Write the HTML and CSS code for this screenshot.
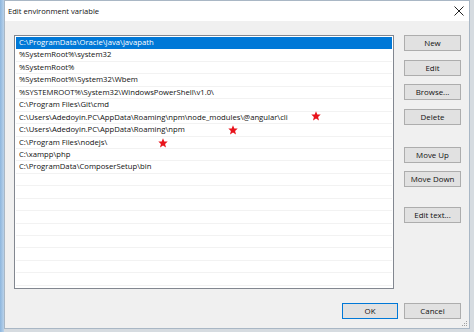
FILE: index.html
```html
<!DOCTYPE html>
<html>
<head>
    <meta charset="utf-8" />
    <title>Edit environment variable</title>
    <link rel="stylesheet" href="styles.css">
</head>
<body>
    <div class="window">
        <div class="titlebar">
            <span class="title">Edit environment variable</span>
            <svg class="close" width="10" height="10" viewBox="0 0 10 10">
                <path d="M0.5 0.5 L9.5 9.5 M9.5 0.5 L0.5 9.5" stroke="#222" stroke-width="1" fill="none" />
            </svg>
        </div>
        <div class="content">
            <div class="listbox">
                <div class="row selected">C:\ProgramData\Oracle\Java\javapath</div>
                <div class="row">%SystemRoot%\system32</div>
                <div class="row">%SystemRoot%</div>
                <div class="row">%SystemRoot%\System32\Wbem</div>
                <div class="row">%SYSTEMROOT%\System32\WindowsPowerShell\v1.0\</div>
                <div class="row">C:\Program Files\Git\cmd</div>
                <div class="row">C:\Users\Adedoyin.PC\AppData\Roaming\npm\node_modules\@angular\cli</div>
                <div class="row">C:\Users\Adedoyin.PC\AppData\Roaming\npm</div>
                <div class="row">C:\Program Files\nodejs\</div>
                <div class="row">C:\xampp\php</div>
                <div class="row">C:\ProgramData\ComposerSetup\bin</div>
                <div class="row"></div>
                <div class="row"></div>
                <div class="row"></div>
                <div class="row"></div>
                <div class="row"></div>
                <div class="row"></div>
                <div class="row"></div>
                <div class="row"></div>
                <div class="row"></div>
                <div class="row"></div>

                <!-- red marks drawn over the list -->
                <svg class="star star-1" viewBox="0 0 10 10"><polygon points="5,0.3 6.3,3.4 9.7,3.6 7.1,5.9 8,9.5 5,7.6 2,9.5 2.9,5.9 0.3,3.6 3.7,3.4" /></svg>
                <svg class="star star-2" viewBox="0 0 10 10"><polygon points="5,0.3 6.3,3.4 9.7,3.6 7.1,5.9 8,9.5 5,7.6 2,9.5 2.9,5.9 0.3,3.6 3.7,3.4" /></svg>
                <svg class="star star-3" viewBox="0 0 10 10"><polygon points="5,0.3 6.3,3.4 9.7,3.6 7.1,5.9 8,9.5 5,7.6 2,9.5 2.9,5.9 0.3,3.6 3.7,3.4" /></svg>
            </div>
            <div class="buttons">
                <div class="group">
                    <button class="btn">New</button>
                    <button class="btn">Edit</button>
                    <button class="btn">Browse...</button>
                    <button class="btn">Delete</button>
                </div>
                <div class="group move">
                    <button class="btn">Move Up</button>
                    <button class="btn">Move Down</button>
                </div>
                <div class="group text">
                    <button class="btn">Edit text...</button>
                </div>
            </div>
        </div>
        <div class="footer">
            <button class="btn ok">OK</button>
            <button class="btn">Cancel</button>
        </div>
        <svg class="grip" width="6" height="6" viewBox="0 0 6 6">
            <rect x="4" y="0" width="1" height="1" fill="#a0a0a0" />
            <rect x="2" y="2" width="1" height="1" fill="#a0a0a0" />
            <rect x="4" y="2" width="1" height="1" fill="#a0a0a0" />
            <rect x="0" y="4" width="1" height="1" fill="#a0a0a0" />
            <rect x="2" y="4" width="1" height="1" fill="#a0a0a0" />
            <rect x="4" y="4" width="1" height="1" fill="#a0a0a0" />
        </svg>
    </div>
</body>
</html>
```

FILE: styles.css
```css
body {
    margin: 0;
    width: 474px;
    height: 332px;
    overflow: hidden;
    background: linear-gradient(to right, #8db6de 0, #b9d2ea 4px, #d6dbe0 4px);
    font-family: "Open Sans", "Noto Sans", sans-serif;
    color: #000;
}

.window {
    position: relative;
    margin-left: 4px;
    width: 466px;
    height: 329px;
    box-sizing: border-box;
    border: 1px solid #a9b7c5;
    background-color: #f0f0f0;
    display: flex;
    flex-direction: column;
}

.titlebar {
    height: 20px;
    background-color: #fff;
    display: flex;
    align-items: center;
    justify-content: space-between;
    padding: 0 5px 0 3px;
}

    .titlebar .title {
        font-size: 7.6px;
        color: #111;
    }

.content {
    display: flex;
    gap: 10px;
    padding: 14px 8px 0 9px;
}

.listbox {
    position: relative;
    width: 380px;
    height: 254px;
    box-sizing: border-box;
    border: 1px solid #828790;
    background-color: #fff;
    padding: 1px 1px;
    overflow: hidden;
}

    .listbox .row {
        height: 12.45px;
        box-sizing: border-box;
        border-bottom: 1px solid #f2f2f2;
        padding-left: 3px;
        font-size: 7.7px;
        line-height: 11.45px;
        white-space: nowrap;
        color: #111;
    }

        .listbox .row.selected {
            background-color: #0078d7;
            color: #fff;
            border-bottom-color: #0078d7;
        }

.star {
    position: absolute;
    width: 10px;
    height: 10px;
    fill: #e8131b;
}

.star-1 {
    left: 296px;
    top: 75px;
}

.star-2 {
    left: 213px;
    top: 89px;
}

.star-3 {
    left: 143px;
    top: 102px;
}

.buttons {
    display: flex;
    flex-direction: column;
}

.group {
    display: flex;
    flex-direction: column;
    gap: 8.5px;
}

    .group.move {
        margin-top: 22px;
    }

    .group.text {
        margin-top: 20px;
    }

.btn {
    width: 57px;
    height: 16px;
    margin: 0;
    padding: 0;
    box-sizing: border-box;
    border: 1px solid #adadad;
    background-color: #e1e1e1;
    font-family: "Open Sans", "Noto Sans", sans-serif;
    font-size: 7.9px;
    color: #111;
    text-align: center;
}

.footer {
    display: flex;
    justify-content: flex-end;
    gap: 6px;
    margin-top: 14px;
    padding-right: 8px;
}

    .footer .ok {
        width: 56px;
        border-color: #0078d7;
    }

.grip {
    position: absolute;
    right: 1px;
    bottom: 1px;
}
```
